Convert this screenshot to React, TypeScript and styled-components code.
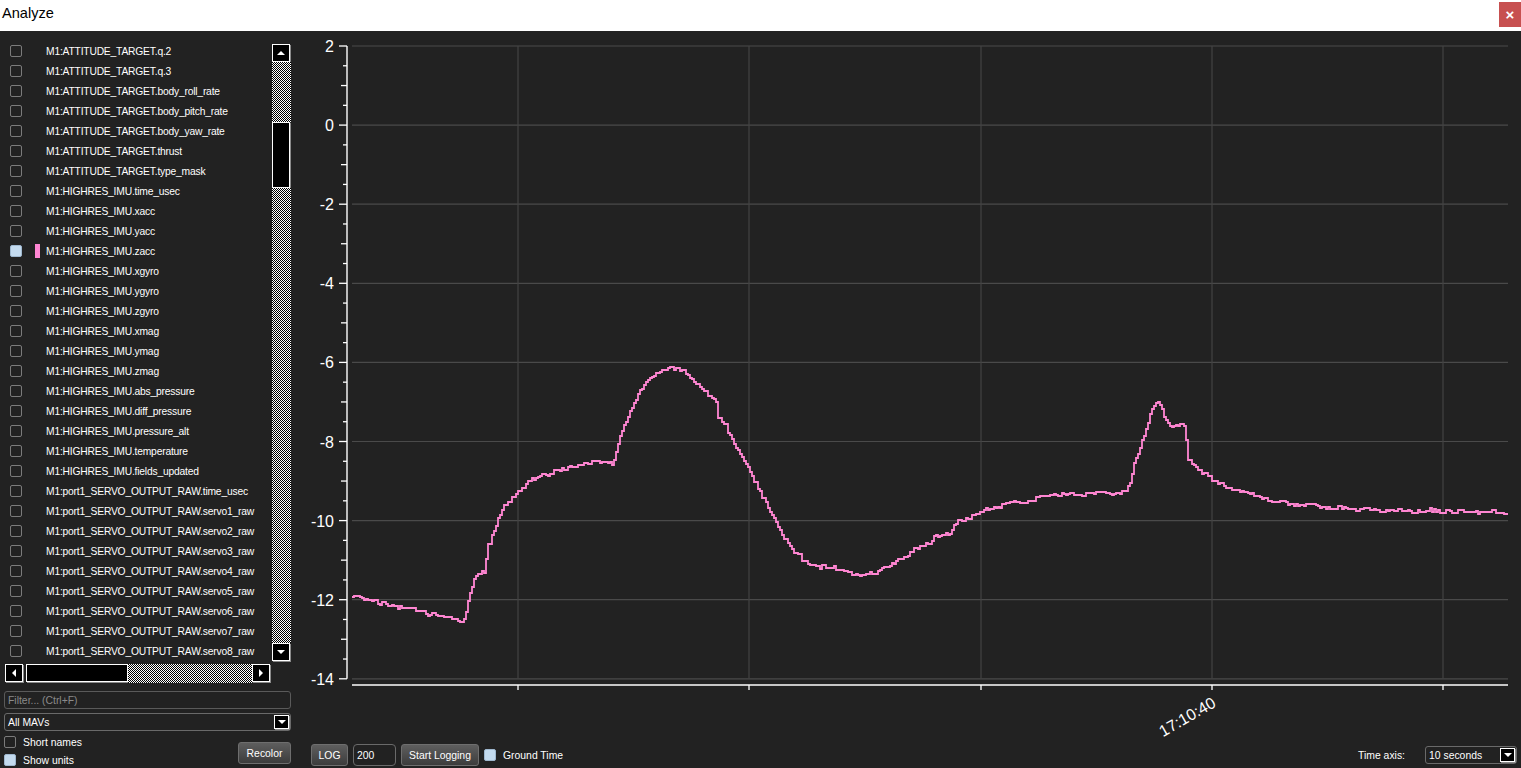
import React from "react";
import styled, { createGlobalStyle } from "styled-components";

const Global = createGlobalStyle`
  html, body { margin: 0; padding: 0; background: #222222; overflow: hidden; }
  * { box-sizing: border-box; }
`;

const UI_FONT = `"Liberation Sans", Arial, sans-serif`;
const PINK = "#ff86d2";
const CHECKER = `repeating-conic-gradient(#ffffff 0 25%, #000000 0 50%) 0 0 / 2px 2px`;

const Window = styled.div`
  width: 1521px;
  height: 768px;
  display: flex;
  flex-direction: column;
  background: #222222;
  font-family: ${UI_FONT};
  color: #ffffff;
`;

const TitleBar = styled.div`
  height: 31px;
  flex: none;
  background: #ffffff;
  display: flex;
  justify-content: space-between;
  align-items: flex-start;
`;

const Title = styled.span`
  font-size: 14.6px;
  line-height: 18px;
  padding: 4px 0 0 2px;
  color: #000000;
`;

const CloseBtn = styled.div`
  width: 22px;
  height: 25px;
  margin-top: 2px;
  background: #c75050;
  color: #ffffff;
  font-size: 15px;
  font-weight: bold;
  display: flex;
  align-items: center;
  justify-content: center;
`;

const Body = styled.div`
  flex: 1;
  display: flex;
  min-height: 0;
`;

const LeftPanel = styled.div`
  width: 300px;
  flex: none;
  display: flex;
  flex-direction: column;
  padding-top: 10px;
`;

const ListArea = styled.div`
  display: flex;
  height: 620px;
`;

const List = styled.div`
  width: 272px;
  display: flex;
  flex-direction: column;
  overflow: hidden;
`;

const Row = styled.div`
  height: 20px;
  flex: none;
  display: flex;
  align-items: center;
  padding-left: 10px;
`;

const Check = styled.div<{ $on?: boolean }>`
  width: 12px;
  height: 12px;
  flex: none;
  border-radius: 2px;
  border: 1px solid ${(p) => (p.$on ? "#9fb8cf" : "#7b7b7b")};
  background: ${(p) => (p.$on ? "#c4dbef" : "transparent")};
`;

const Marker = styled.div<{ $color?: string }>`
  width: 5px;
  height: 14px;
  flex: none;
  margin-left: 13px;
  background: ${(p) => p.$color ?? "transparent"};
`;

const RowLabel = styled.span`
  margin-left: 6px;
  font-size: 10.3px;
  letter-spacing: -0.2px;
  white-space: nowrap;
  color: #ffffff;
`;

const VScroll = styled.div`
  width: 19px;
  height: 617px;
  margin-top: 3px;
  display: flex;
  flex-direction: column;
`;

const HScroll = styled.div`
  width: 265px;
  height: 19px;
  margin: 3px 0 0 5px;
  display: flex;
`;

const ScrollBtn = styled.div`
  width: 18px;
  height: 18px;
  flex: none;
  background: #000000;
  border: 1px solid #ffffff;
  box-shadow: 1px 1px 0 #8a8a8a;
  display: flex;
  align-items: center;
  justify-content: center;
`;

const Track = styled.div<{ $size?: number }>`
  background: ${CHECKER};
  ${(p) => (p.$size ? `flex: none; flex-basis: ${p.$size}px;` : "flex: 1;")}
`;

const VThumb = styled.div`
  height: 66px;
  width: 18px;
  flex: none;
  background: #000000;
  border: 1px solid #ffffff;
  box-shadow: 1px 1px 0 #8a8a8a;
`;

const HThumb = styled.div`
  width: 102px;
  height: 18px;
  flex: none;
  margin-left: 3px;
  background: #000000;
  border: 1px solid #ffffff;
  box-shadow: 1px 1px 0 #8a8a8a;
`;

const Arrow = styled.div<{ $dir: "up" | "down" | "left" | "right" }>`
  width: 0;
  height: 0;
  ${(p) =>
    p.$dir === "up"
      ? "border-left: 4px solid transparent; border-right: 4px solid transparent; border-bottom: 4px solid #fff;"
      : p.$dir === "down"
      ? "border-left: 4px solid transparent; border-right: 4px solid transparent; border-top: 4px solid #fff;"
      : p.$dir === "left"
      ? "border-top: 4px solid transparent; border-bottom: 4px solid transparent; border-right: 4px solid #fff;"
      : "border-top: 4px solid transparent; border-bottom: 4px solid transparent; border-left: 4px solid #fff;"}
`;

const FilterBox = styled.div`
  margin: 8px 0 0 4px;
  width: 287px;
  height: 18px;
  border: 1px solid #5a5a5a;
  border-radius: 3px;
  padding-left: 3px;
  display: flex;
  align-items: center;
  font-size: 10.4px;
  color: #8a8a8a;
`;

const Combo = styled.div<{ $width: number }>`
  width: ${(p) => p.$width}px;
  height: 18px;
  border: 1px solid #6a6a6a;
  border-radius: 3px;
  padding: 0 1px 0 3px;
  display: flex;
  align-items: center;
  justify-content: space-between;
  font-size: 10.4px;
  color: #ffffff;
`;

const MavCombo = styled(Combo)`
  margin: 4px 0 0 4px;
`;

const DropBtn = styled.div`
  width: 15px;
  height: 14px;
  background: #000000;
  border: 1px solid #ffffff;
  box-shadow: 1px 1px 0 #8a8a8a;
  display: flex;
  align-items: center;
  justify-content: center;
`;

const Options = styled.div`
  display: flex;
  justify-content: space-between;
  padding: 4px 9px 0 4px;
`;

const OptionCol = styled.div`
  display: flex;
  flex-direction: column;
  gap: 6px;
  padding-top: 1px;
`;

const CheckRow = styled.div`
  display: flex;
  align-items: center;
  gap: 7px;
  height: 12px;
  font-size: 10.4px;
  color: #ffffff;
`;

const Button = styled.div<{ $width: number }>`
  width: ${(p) => p.$width}px;
  height: 22px;
  border: 1px solid #6e6e6e;
  border-radius: 3px;
  background: linear-gradient(#5e5e5e, #3c3c3c);
  display: flex;
  align-items: center;
  justify-content: center;
  font-size: 10.4px;
  color: #ffffff;
`;

const RecolorBtn = styled(Button)`
  margin-top: 7px;
`;

const RightPanel = styled.div`
  flex: 1;
  display: flex;
  flex-direction: column;
`;

const ChartSvg = styled.svg`
  display: block;
  width: 1221px;
  height: 709px;
  flex: none;
`;

const BottomBar = styled.div`
  flex: 1;
  display: flex;
  align-items: flex-start;
  padding: 4px 4px 0 11px;
`;

const BarGroup = styled.div`
  display: flex;
  align-items: center;
  gap: 5px;
`;

const NumInput = styled.div`
  width: 43px;
  height: 22px;
  border: 1px solid #6a6a6a;
  border-radius: 4px;
  padding-left: 3px;
  display: flex;
  align-items: center;
  font-size: 10.4px;
  color: #ffffff;
`;

const Spacer = styled.div`
  flex: 1;
`;

const TimeLabel = styled.span`
  font-size: 10.4px;
  color: #ffffff;
  margin-right: 20px;
`;

const TimeGroup = styled.div`
  display: flex;
  align-items: center;
  height: 22px;
`;

const GroundLabel = styled.span`
  margin-left: 2px;
  font-size: 10.4px;
  color: #ffffff;
`;

const ROWS = [
  "M1:ATTITUDE_TARGET.q.2",
  "M1:ATTITUDE_TARGET.q.3",
  "M1:ATTITUDE_TARGET.body_roll_rate",
  "M1:ATTITUDE_TARGET.body_pitch_rate",
  "M1:ATTITUDE_TARGET.body_yaw_rate",
  "M1:ATTITUDE_TARGET.thrust",
  "M1:ATTITUDE_TARGET.type_mask",
  "M1:HIGHRES_IMU.time_usec",
  "M1:HIGHRES_IMU.xacc",
  "M1:HIGHRES_IMU.yacc",
  "M1:HIGHRES_IMU.zacc",
  "M1:HIGHRES_IMU.xgyro",
  "M1:HIGHRES_IMU.ygyro",
  "M1:HIGHRES_IMU.zgyro",
  "M1:HIGHRES_IMU.xmag",
  "M1:HIGHRES_IMU.ymag",
  "M1:HIGHRES_IMU.zmag",
  "M1:HIGHRES_IMU.abs_pressure",
  "M1:HIGHRES_IMU.diff_pressure",
  "M1:HIGHRES_IMU.pressure_alt",
  "M1:HIGHRES_IMU.temperature",
  "M1:HIGHRES_IMU.fields_updated",
  "M1:port1_SERVO_OUTPUT_RAW.time_usec",
  "M1:port1_SERVO_OUTPUT_RAW.servo1_raw",
  "M1:port1_SERVO_OUTPUT_RAW.servo2_raw",
  "M1:port1_SERVO_OUTPUT_RAW.servo3_raw",
  "M1:port1_SERVO_OUTPUT_RAW.servo4_raw",
  "M1:port1_SERVO_OUTPUT_RAW.servo5_raw",
  "M1:port1_SERVO_OUTPUT_RAW.servo6_raw",
  "M1:port1_SERVO_OUTPUT_RAW.servo7_raw",
  "M1:port1_SERVO_OUTPUT_RAW.servo8_raw",
];

// Chart geometry (absolute window coordinates; svg viewBox is offset by 300,31)
const X0 = 352;
const X1 = 1508;
const Y_TOP = 46;
const STEP = 79.1;
const AXIS_X = 347;
const AXIS_Y = 685;
const VGRID = [518, 749, 981, 1212, 1443];

const KEY: [number, number][] = [
  [352, 597], [370, 598], [380, 604], [400, 607], [420, 611], [440, 616], [455, 618],
  [462, 623], [465, 615], [470, 593], [475, 577], [480, 574], [485, 570], [487, 545],
  [490, 540], [495, 527], [500, 515], [505, 505], [510, 498], [520, 490], [530, 482],
  [540, 476], [560, 470], [580, 465], [600, 462], [610, 462], [613, 465], [617, 448],
  [622, 432], [630, 410], [640, 390], [650, 378], [660, 371], [668, 367], [680, 370],
  [690, 377], [700, 385], [710, 398], [716, 402], [717, 415], [725, 425], [735, 445],
  [745, 462], [755, 482], [765, 502], [775, 522], [785, 540], [795, 553], [805, 563],
  [815, 566], [830, 568], [845, 570], [860, 577], [870, 573], [880, 570], [890, 566],
  [900, 559], [910, 552], [920, 547], [930, 543], [935, 535], [950, 535], [955, 523],
  [965, 518], [975, 515], [985, 510], [1000, 506], [1020, 502], [1040, 497], [1060, 494],
  [1080, 494], [1100, 493], [1115, 492], [1125, 493], [1130, 485], [1135, 460],
  [1140, 448], [1145, 430], [1150, 415], [1157, 401], [1162, 412], [1167, 422],
  [1172, 425], [1185, 426], [1187, 458], [1192, 465], [1200, 470], [1210, 478],
  [1220, 485], [1235, 490], [1250, 495], [1270, 500], [1300, 505], [1340, 508],
  [1380, 510], [1420, 511], [1460, 511], [1508, 513],
];

function interp(x: number): number {
  for (let i = 0; i < KEY.length - 1; i++) {
    const [ax, ay] = KEY[i];
    const [bx, by] = KEY[i + 1];
    if (x >= ax && x <= bx) {
      const t = (x - ax) / (bx - ax || 1);
      return ay + (by - ay) * t;
    }
  }
  return KEY[KEY.length - 1][1];
}

function hash(n: number): number {
  const s = Math.sin(n * 12.9898) * 43758.5453;
  return s - Math.floor(s);
}

function buildPath(): string {
  let d = "";
  let prev = 0;
  for (let x = X0; x <= X1; x += 2) {
    const base = interp(x);
    const noise = (hash(x) - 0.5) * 3.6 + Math.sin(x * 0.21) * 0.9;
    let y = Math.round(base + noise);
    if (x === X0) {
      d += `M${x} ${y}`;
    } else {
      if (hash(x + 7.3) < 0.3 && Math.abs(y - prev) < 3) y = prev;
      d += ` H${x} V${y}`;
    }
    prev = y;
  }
  return d;
}

const DATA_PATH = buildPath();

function Chart() {
  const labels = [2, 0, -2, -4, -6, -8, -10, -12, -14];
  const ticks: React.ReactNode[] = [];
  for (let i = 0; i < labels.length; i++) {
    const y = Y_TOP + i * STEP;
    ticks.push(<line key={`M${i}`} x1={339} x2={AXIS_X} y1={y} y2={y} stroke="#fff" strokeWidth={1.3} />);
    if (i < labels.length - 1) {
      for (let k = 1; k < 4; k++) {
        const yy = y + (k * STEP) / 4;
        ticks.push(
          <line key={`m${i}-${k}`} x1={k === 2 ? 341 : 343} x2={AXIS_X} y1={yy} y2={yy} stroke="#fff" strokeWidth={1.3} />
        );
      }
    }
  }
  return (
    <ChartSvg viewBox="300 31 1221 709">
      {labels.map((_, i) => (
        <line key={`h${i}`} x1={X0} x2={X1} y1={Y_TOP + i * STEP} y2={Y_TOP + i * STEP} stroke="#4a4a4a" strokeWidth={1.2} />
      ))}
      {VGRID.map((x) => (
        <line key={`v${x}`} x1={x} x2={x} y1={Y_TOP} y2={Y_TOP + 8 * STEP} stroke="#444" strokeWidth={1.2} />
      ))}
      <line x1={AXIS_X} x2={AXIS_X} y1={Y_TOP} y2={Y_TOP + 8 * STEP} stroke="#fff" strokeWidth={1.4} />
      {ticks}
      {labels.map((v, i) => (
        <text
          key={`l${i}`}
          x={334}
          y={Y_TOP + i * STEP + 6}
          textAnchor="end"
          fontFamily={UI_FONT}
          fontSize={16}
          fill="#fff"
        >
          {v}
        </text>
      ))}
      <line x1={X0} x2={X1} y1={AXIS_Y} y2={AXIS_Y} stroke="#fff" strokeWidth={1.4} />
      {VGRID.map((x) => (
        <line key={`t${x}`} x1={x} x2={x} y1={AXIS_Y} y2={AXIS_Y + 5} stroke="#fff" strokeWidth={1.3} />
      ))}
      <text
        x={1217}
        y={706}
        textAnchor="end"
        fontFamily={UI_FONT}
        fontSize={16}
        fill="#fff"
        transform="rotate(-30 1217 706)"
      >
        17:10:40
      </text>
      <path d={DATA_PATH} fill="none" stroke={PINK} strokeWidth={1.8} strokeLinejoin="miter" />
    </ChartSvg>
  );
}

export default function App() {
  return (
    <Window>
      <Global />
      <TitleBar>
        <Title>Analyze</Title>
        <CloseBtn>×</CloseBtn>
      </TitleBar>
      <Body>
        <LeftPanel>
          <ListArea>
            <List>
              {ROWS.map((r) => {
                const active = r === "M1:HIGHRES_IMU.zacc";
                return (
                  <Row key={r}>
                    <Check $on={active} />
                    <Marker $color={active ? PINK : undefined} />
                    <RowLabel>{r}</RowLabel>
                  </Row>
                );
              })}
            </List>
            <VScroll>
              <ScrollBtn>
                <Arrow $dir="up" />
              </ScrollBtn>
              <Track $size={60} />
              <VThumb />
              <Track />
              <ScrollBtn>
                <Arrow $dir="down" />
              </ScrollBtn>
            </VScroll>
          </ListArea>
          <HScroll>
            <ScrollBtn>
              <Arrow $dir="left" />
            </ScrollBtn>
            <HThumb />
            <Track />
            <ScrollBtn>
              <Arrow $dir="right" />
            </ScrollBtn>
          </HScroll>
          <FilterBox>Filter... (Ctrl+F)</FilterBox>
          <MavCombo $width={287}>
            <span>All MAVs</span>
            <DropBtn>
              <Arrow $dir="down" />
            </DropBtn>
          </MavCombo>
          <Options>
            <OptionCol>
              <CheckRow>
                <Check />
                <span>Short names</span>
              </CheckRow>
              <CheckRow>
                <Check $on />
                <span>Show units</span>
              </CheckRow>
            </OptionCol>
            <RecolorBtn $width={53}>Recolor</RecolorBtn>
          </Options>
        </LeftPanel>
        <RightPanel>
          <Chart />
          <BottomBar>
            <BarGroup>
              <Button $width={37}>LOG</Button>
              <NumInput>200</NumInput>
              <Button $width={78}>Start Logging</Button>
              <Check $on />
              <GroundLabel>Ground Time</GroundLabel>
            </BarGroup>
            <Spacer />
            <TimeGroup>
              <TimeLabel>Time axis:</TimeLabel>
              <Combo $width={92}>
                <span>10 seconds</span>
                <DropBtn>
                  <Arrow $dir="down" />
                </DropBtn>
              </Combo>
            </TimeGroup>
          </BottomBar>
        </RightPanel>
      </Body>
    </Window>
  );
}
